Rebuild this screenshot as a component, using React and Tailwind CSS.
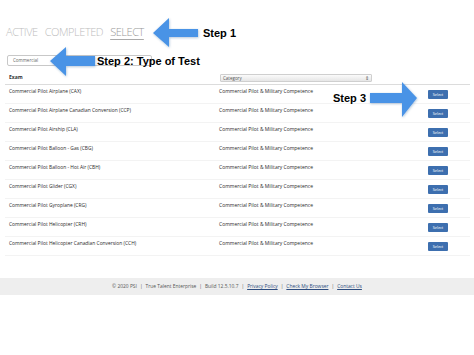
import React from 'react';

const exams = [
  'Commercial Pilot Airplane (CAX)',
  'Commercial Pilot Airplane Canadian Conversion (CCP)',
  'Commercial Pilot Airship (CLA)',
  'Commercial Pilot Balloon - Gas (CBG)',
  'Commercial Pilot Balloon - Hot Air (CBH)',
  'Commercial Pilot Glider (CGX)',
  'Commercial Pilot Gyroplane (CRG)',
  'Commercial Pilot Helicopter (CRH)',
  'Commercial Pilot Helicopter Canadian Conversion (CCH)',
];

// annotation arrows drawn over the page
const Arrows = () => (
  <svg className="absolute left-0 top-0 pointer-events-none" width="474" height="355" viewBox="0 0 474 355">
    <defs>
      <filter id="sh" x="-20%" y="-20%" width="140%" height="140%">
        <feDropShadow dx="0.5" dy="0.8" stdDeviation="0.8" floodColor="#1d4f8a" floodOpacity="0.35" />
      </filter>
    </defs>
    <g fill="#4a93e6" filter="url(#sh)">
      {/* step 1: points left */}
      <polygon points="153,33 169,18 169,29 198,29 198,37 169,37 169,47" />
      {/* step 2: points left */}
      <polygon points="50,61 66,47 66,56 95,56 95,66 66,66 66,76" />
      {/* step 3: points right */}
      <polygon points="417,98 402,82 402,93 370,93 370,103 402,103 402,117" />
    </g>
  </svg>
);

const App = () => {
  return (
    <div className="relative w-[474px] h-[355px] overflow-hidden bg-white font-['Open_Sans',sans-serif] text-[#333]">
      {/* tabs */}
      <div className="flex gap-[7px] pl-[6px] pt-[25px] text-[11px] leading-[14px] font-light tracking-[-0.45px]">
        <span className="text-[#bdbdbd]">ACTIVE</span>
        <span className="text-[#bdbdbd]">COMPLETED</span>
        <span className="text-[#999] underline decoration-[#aaa] underline-offset-[3px]">SELECT</span>
      </div>

      {/* search */}
      <div className="mt-[16px] ml-[7px] w-[145px] h-[11px] border border-[#c8c8c8] rounded-[2px] flex items-center pl-[5px] text-[4.5px] text-[#666]">
        Commercial
      </div>

      {/* table */}
      <div className="mx-[5px] w-[465px]">
        <div className="flex items-end h-[19px] pb-[2px] border-b border-[#dcdcdc]">
          <div className="w-[215px] pl-[4px] pb-[2px] text-[5px] leading-[6px] font-bold">Exam</div>
          <div className="w-[152px] h-[8px] border border-[#cfcfcf] rounded-[1px] bg-gradient-to-b from-[#fbfbfb] to-[#e6e6e6] flex items-center justify-between px-[2px] text-[4.5px] leading-[5px] text-[#555]">
            <span>Category</span>
            <span className="text-[5px]">⇕</span>
          </div>
        </div>
        {exams.map((name) => (
          <div key={name} className="flex items-start h-[19px] border-b border-[#f3f3f3]">
            <div className="w-[214px] pl-[4px] pt-[3px] text-[4.9px] leading-[6px] text-[#2b2b2b]">{name}</div>
            <div className="w-[209px] pt-[3px] text-[5px] leading-[6px] text-[#2b2b2b]">Commercial Pilot &amp; Military Competence</div>
            <button className="mt-[5px] w-[20px] h-[9px] rounded-[1px] bg-[#3d6faf] text-white text-[3.8px] leading-[9px]">
              Select
            </button>
          </div>
        ))}
      </div>

      {/* footer */}
      <div className="mt-[22px] h-[17px] bg-[#eeeeee] flex items-center justify-center text-[4.9px] text-[#555] gap-[3px]">
        <span>© 2020 PSI</span>
        <span>|</span>
        <span>True Talent Enterprise</span>
        <span>|</span>
        <span>Build 12.5.10.7</span>
        <span>|</span>
        <span className="underline text-[#2d4d80]">Privacy Policy</span>
        <span>|</span>
        <span className="underline text-[#2d4d80]">Check My Browser</span>
        <span>|</span>
        <span className="underline text-[#2d4d80]">Contact Us</span>
      </div>

      <Arrows />

      <div className="absolute left-[203px] top-[26px] font-['Liberation_Sans',Arial,sans-serif] font-bold text-[11px] leading-[14px] text-black">Step 1</div>
      <div className="absolute left-[97px] top-[54px] font-['Liberation_Sans',Arial,sans-serif] font-bold text-[11px] leading-[14px] text-black">Step 2: Type of Test</div>
      <div className="absolute left-[333px] top-[91px] font-['Liberation_Sans',Arial,sans-serif] font-bold text-[11px] leading-[14px] text-black">Step 3</div>
    </div>
  );
};

export default App;
